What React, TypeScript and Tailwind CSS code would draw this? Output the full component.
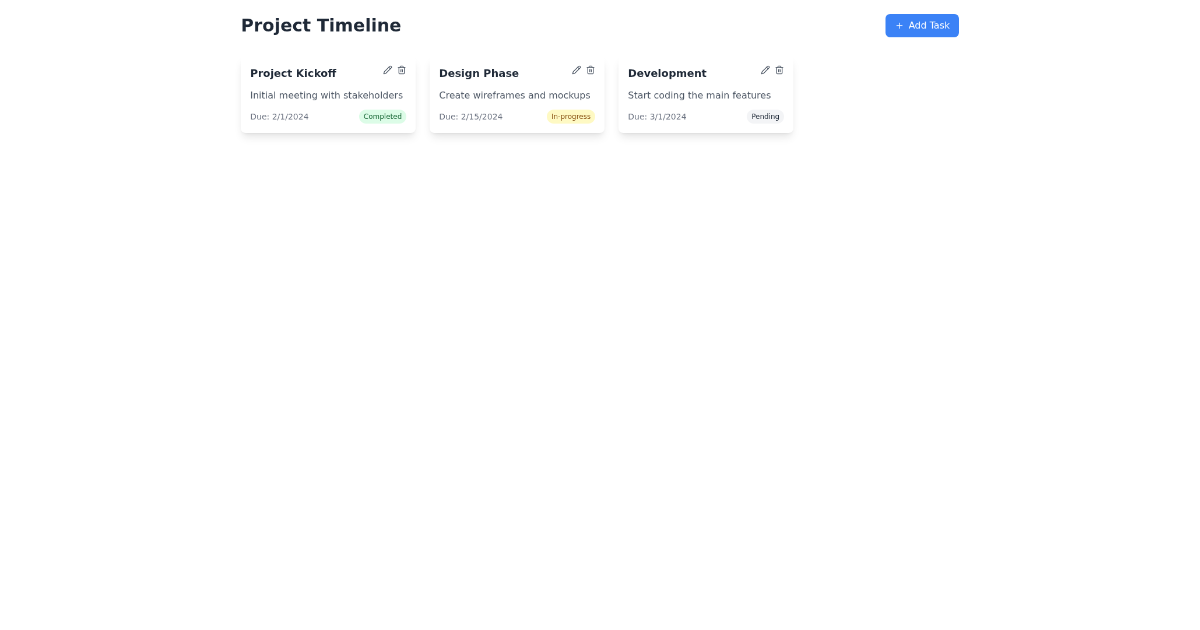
import { Pencil, Trash2, Plus } from "lucide-react";

const tasks = [
  { title: "Project Kickoff", desc: "Initial meeting with stakeholders", due: "Due: 2/1/2024", status: "Completed", badge: "bg-[#dcfce7] text-[#166534]" },
  { title: "Design Phase", desc: "Create wireframes and mockups", due: "Due: 2/15/2024", status: "In-progress", badge: "bg-[#fef9c3] text-[#854d0e]" },
  { title: "Development", desc: "Start coding the main features", due: "Due: 3/1/2024", status: "Pending", badge: "bg-[#f3f4f6] text-[#1f2937]" },
];

export default function App() {
  return (
    <div className="h-[630px] overflow-hidden bg-white">
      <div className="h-[1081px] w-[2058.5px] origin-top-left scale-[0.58295] will-change-transform bg-white font-['DejaVu_Sans',sans-serif]">
        <div className="mx-auto max-w-7xl px-6 py-6">
          <div className="mb-8 flex items-center justify-between">
            <h1 className="text-3xl font-bold text-[#1f2937]">Project Timeline</h1>
            <button className="flex items-center gap-2 rounded-lg bg-[#3b82f6] px-4 py-2 text-base text-white">
              <Plus size={16} />
              Add Task
            </button>
          </div>
          <div className="flex gap-6">
            {tasks.map((t) => (
              <div key={t.title} className="w-[300px] rounded-lg bg-white p-4 shadow-lg">
                <div className="mb-3 flex items-start justify-between">
                  <h3 className="text-lg font-bold text-[#1f2937]">{t.title}</h3>
                  <div className="flex gap-2 text-[#4b5563]">
                    <Pencil size={16} />
                    <Trash2 size={16} />
                  </div>
                </div>
                <p className="mb-3 text-base text-[#4b5563]">{t.desc}</p>
                <div className="flex items-center justify-between">
                  <span className="text-sm text-[#6b7280]">{t.due}</span>
                  <span className={`rounded-full px-2 py-1 text-xs ${t.badge}`}>{t.status}</span>
                </div>
              </div>
            ))}
          </div>
        </div>
      </div>
    </div>
  );
}
